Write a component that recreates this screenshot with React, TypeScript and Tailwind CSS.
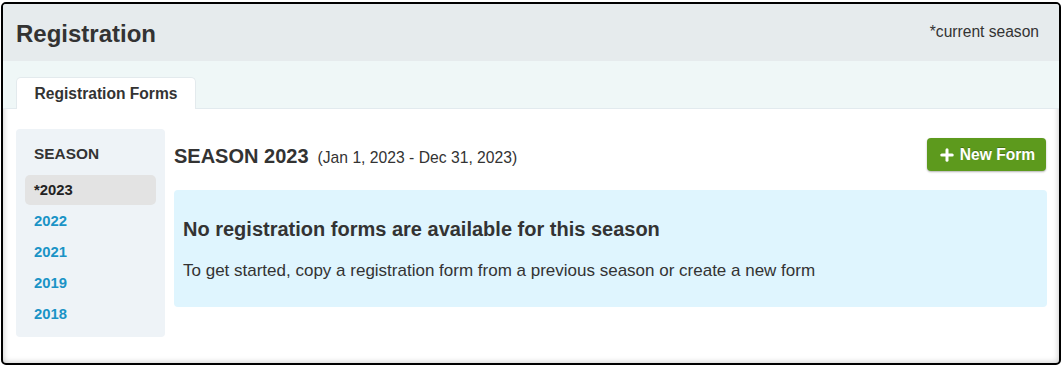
import { Plus } from "lucide-react";

const years = ["2022", "2021", "2019", "2018"];

export default function App() {
  return (
    <div className="w-[1062px] h-[366px] bg-white pl-px pt-[2px]" style={{ fontFamily: '"Liberation Sans", Arial, sans-serif' }}>
      <div className="w-[1060px] h-[363px] border-2 border-black rounded-[5px] overflow-hidden flex flex-col bg-white shadow-[inset_0_0_6px_rgba(0,0,0,0.25)]">
        <div className="h-[57px] shrink-0 bg-[#e6ebed] flex items-center justify-between pl-[13px] pr-[20px]">
          <h1 className="text-[24px] font-bold text-[#333] leading-none pt-[3px]">Registration</h1>
          <span className="text-[15.6px] text-[#333] -mt-[2px]">*current season</span>
        </div>
        <div className="h-[48px] shrink-0 bg-[#eff7f7] border-b border-[#e2eaee] flex items-end pl-[13px]">
          <div className="h-[32px] w-[180px] bg-white rounded-t-[5px] border border-b-0 border-[#e3eaed] flex items-center justify-center text-[15.6px] font-bold text-[#333] -mb-px pt-[1px]">
            Registration Forms
          </div>
        </div>
        <div className="flex-1 flex pl-[13px] pt-[20px] pr-[12px] gap-[9px] items-start">
          <div className="w-[149px] h-[208px] bg-[#eef3f7] rounded-[4px] px-[9px] pt-[13px]">
            <div className="text-[15.4px] font-bold text-[#333] pl-[9px] mb-[10px]">SEASON</div>
            <div className="h-[30px] bg-[#e3e3e3] rounded-[5px] flex items-center pl-[9px] text-[14.8px] font-bold text-[#222]">*2023</div>
            {years.map((y) => (
              <div key={y} className="h-[31px] flex items-center pl-[9px] text-[14.8px] font-bold text-[#1a93c6]">
                {y}
              </div>
            ))}
          </div>
          <div className="flex-1 flex flex-col">
            <div className="h-[61px] flex items-start justify-between pt-[9px]">
              <div className="flex items-baseline gap-[9px] pt-[3px]">
                <span className="text-[20px] font-bold text-[#333]">SEASON 2023</span>
                <span className="text-[15.7px] text-[#333]">(Jan 1, 2023 - Dec 31, 2023)</span>
              </div>
              <button className="h-[33px] w-[119px] mr-[1px] bg-[#5d9a1d] rounded-[4px] shadow-[0_1px_2px_rgba(0,0,0,0.3)] flex items-center justify-center gap-[4px] text-white font-bold text-[15.6px] [text-shadow:0_-1px_0_rgba(0,0,0,0.25)]">
                <Plus className="w-[18px] h-[18px]" strokeWidth={4} />
                New Form
              </button>
            </div>
            <div className="h-[117px] bg-[#dff5fe] rounded-[4px] px-[9px] pt-[27px]">
              <div className="text-[20px] font-bold text-[#333] leading-[24px]">No registration forms are available for this season</div>
              <div className="text-[17px] text-[#333] mt-[17px]">To get started, copy a registration form from a previous season or create a new form</div>
            </div>
          </div>
        </div>
      </div>
    </div>
  );
}
